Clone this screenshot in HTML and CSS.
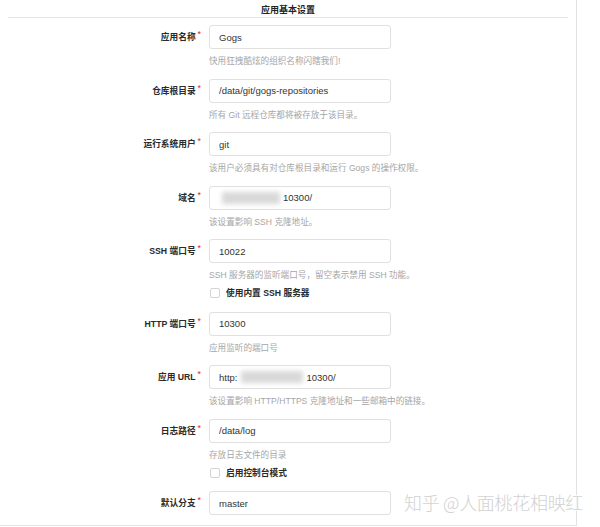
FILE: index.html
```html
<!DOCTYPE html>
<html lang="zh-CN">
<head>
  <meta charset="UTF-8">
  <meta name="viewport" content="width=device-width, initial-scale=1.0">
  <title>安装页面</title>
  <link rel="stylesheet" href="styles.css">
</head>
<body>
  <div class="page">
    <div class="panel">
      <h3 class="title">应用基本设置</h3>

      <div class="field">
        <label class="lbl">应用名称</label>
        <input class="txt" value="Gogs">
        <span class="help">快用狂拽酷炫的组织名称闪瞎我们!</span>
      </div>

      <div class="field">
        <label class="lbl">仓库根目录</label>
        <input class="txt" value="/data/git/gogs-repositories">
        <span class="help">所有 Git 远程仓库都将被存放于该目录。</span>
      </div>

      <div class="field">
        <label class="lbl">运行系统用户</label>
        <input class="txt" value="git">
        <span class="help">该用户必须具有对仓库根目录和运行 Gogs 的操作权限。</span>
      </div>

      <div class="field">
        <label class="lbl">域名</label>
        <div class="txt fake"><span class="blur b1"></span>10300/</div>
        <span class="help">该设置影响 SSH 克隆地址。</span>
      </div>

      <div class="field">
        <label class="lbl">SSH 端口号</label>
        <input class="txt" value="10022">
        <span class="help">SSH 服务器的监听端口号，留空表示禁用 SSH 功能。</span>
        <div class="check"><span class="box"></span>使用内置 SSH 服务器</div>
      </div>

      <div class="field">
        <label class="lbl">HTTP 端口号</label>
        <input class="txt" value="10300">
        <span class="help">应用监听的端口号</span>
      </div>

      <div class="field">
        <label class="lbl">应用 URL</label>
        <div class="txt fake">http:<span class="blur b2"></span>10300/</div>
        <span class="help">该设置影响 HTTP/HTTPS 克隆地址和一些邮箱中的链接。</span>
      </div>

      <div class="field">
        <label class="lbl">日志路径</label>
        <input class="txt" value="/data/log">
        <span class="help">存放日志文件的目录</span>
        <div class="check"><span class="box"></span>启用控制台模式</div>
      </div>

      <div class="field">
        <label class="lbl">默认分支</label>
        <input class="txt" value="master">
      </div>
    </div>
  </div>
  <div class="mark">知乎 @人面桃花相映红</div>
</body>
</html>
```

FILE: styles.css
```css
*{
  box-sizing: border-box;
  margin:0;
}
body{
  font-family: "Liberation Sans", "Noto Sans CJK SC", sans-serif;
  font-size:9px;
  color:#333;
  background:#fff;
  width:600px;
  height:527px;
  overflow:hidden;
  position:relative;
}
.page{
  width:577px;
  height:526px;
  border-right:1px solid #e2e2e2;
  border-bottom:1px solid #dce8e8;
  overflow:hidden;
}
.panel{
  padding:0 8px;
}
.title{
  font-size:9px;
  font-weight:700;
  text-align:center;
  line-height:12px;
  padding:4px 0 1px;
  border-bottom:1px solid #e6e6e6;
  margin-bottom:7px;
  color:#222;
}
.field{
  display:grid;
  grid-template-columns:193px 182px;
  column-gap:8px;
  margin-bottom:9.5px;
}
.lbl{
  grid-column:1;
  grid-row:1;
  text-align:right;
  font-weight:700;
  line-height:24px;
  color:#2a2a2a;
  font-size:8.7px;
}
.lbl::after{
  content:"*";
  color:#db2828;
  margin-left:2px;
  font-weight:400;
  position:relative;
  top:-3px;
}
.txt{
  grid-column:2;
  grid-row:1;
  height:24px;
  border:1px solid #e0e0e0;
  border-radius:3px;
  padding:0 9px;
  font-family:"Liberation Sans", sans-serif;
  font-size:9.5px;
  color:#333;
  background:#fff;
  outline:none;
  width:182px;
}
.fake{
  display:flex;
  align-items:center;
}
.blur{
  display:inline-block;
  height:12px;
  background:#cfcfcf;
  filter:blur(2.5px);
  opacity:.8;
}
.b1{
  width:58px;
  margin:0 3px 0 3px;
}
.b2{
  width:62px;
  margin:0 4px 0 3px;
}
.help{
  grid-column:2;
  margin-top:4px;
  line-height:16px;
  color:#a6a6a6;
  font-size:8.6px;
  white-space:nowrap;
}
.check{
  grid-column:2;
  display:flex;
  align-items:center;
  gap:6px;
  font-weight:700;
  font-size:8.7px;
  line-height:18px;
  margin-top:1px;
  padding-left:1px;
  color:#2a2a2a;
}
.box{
  width:10px;
  height:10px;
  border:1px solid #d4d4d4;
  border-radius:2px;
  background:#fff;
}
.mark{
  position:absolute;
  left:404px;
  top:491px;
  font-size:18px;
  line-height:22px;
  color:#d2d2d2;
  font-weight:300;
  text-shadow:1px 1px 0 #fff, -1px -1px 0 #fff;
  font-family:"Noto Sans CJK SC", sans-serif;
  letter-spacing:-0.3px;
}
```
